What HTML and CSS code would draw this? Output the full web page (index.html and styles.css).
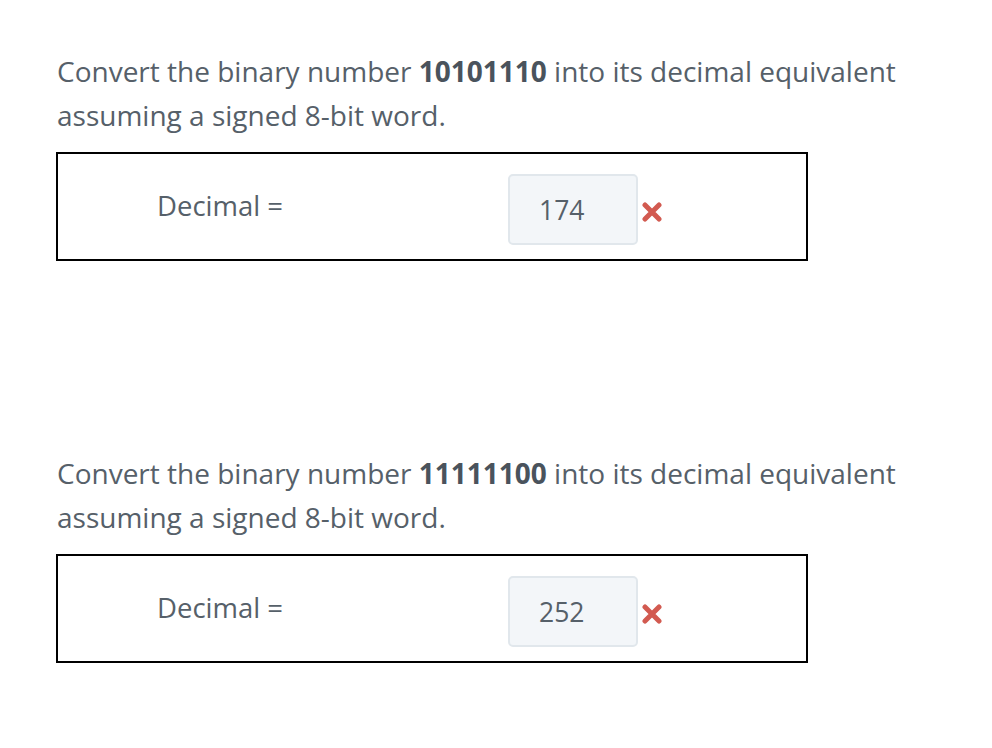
FILE: index.html
```html
<!DOCTYPE html>
<html>
<head>
<meta charset="utf-8">
<link rel="stylesheet" href="styles.css">
</head>
<body>
<div class="page">
  <section class="question">
    <p class="prompt">Convert the binary number <strong>10101110</strong> into its decimal equivalent assuming a signed 8-bit word.</p>
    <div class="answer-box">
      <span class="label">Decimal =</span>
      <span class="field">174</span>
      <svg class="wrong" width="20" height="20" viewBox="0 0 20 20"><path d="M3 3 L17 17 M17 3 L3 17" stroke="#d25a50" stroke-width="5" stroke-linecap="round"/></svg>
    </div>
  </section>
  <section class="question">
    <p class="prompt">Convert the binary number <strong>11111100</strong> into its decimal equivalent assuming a signed 8-bit word.</p>
    <div class="answer-box">
      <span class="label">Decimal =</span>
      <span class="field">252</span>
      <svg class="wrong" width="20" height="20" viewBox="0 0 20 20"><path d="M3 3 L17 17 M17 3 L3 17" stroke="#d25a50" stroke-width="5" stroke-linecap="round"/></svg>
    </div>
  </section>
</div>
</body>
</html>
```
FILE: styles.css
```css
html, body {
  margin: 0;
  padding: 0;
  background: #fff;
}
body {
  font-family: "Open Sans", "Liberation Sans", sans-serif;
  color: #566069;
}
.page {
  padding: 49px 0 0 56px;
  width: 860px;
  display: flex;
  flex-direction: column;
  gap: 190px;
}
.prompt {
  margin: 0 0 15px 1px;
  font-size: 28px;
  line-height: 44px;
  width: 860px;
}
.prompt strong {
  font-weight: 700;
  color: #4a535c;
}
.answer-box {
  box-sizing: border-box;
  width: 752px;
  height: 109px;
  border: 2px solid #000;
  display: flex;
  align-items: flex-start;
  padding: 20px 0 0 99px;
}
.label {
  width: 351px;
  font-size: 27.5px;
  line-height: 30px;
  margin-top: 17px;
  flex: none;
}
.field {
  box-sizing: border-box;
  width: 130px;
  height: 71px;
  background: #f3f6f9;
  border: 2px solid #e1e7ec;
  border-radius: 5px;
  font-size: 26.5px;
  line-height: 68px;
  padding-left: 29px;
  flex: none;
}
.wrong {
  margin: 28px 0 0 4px;
  flex: none;
}
```
